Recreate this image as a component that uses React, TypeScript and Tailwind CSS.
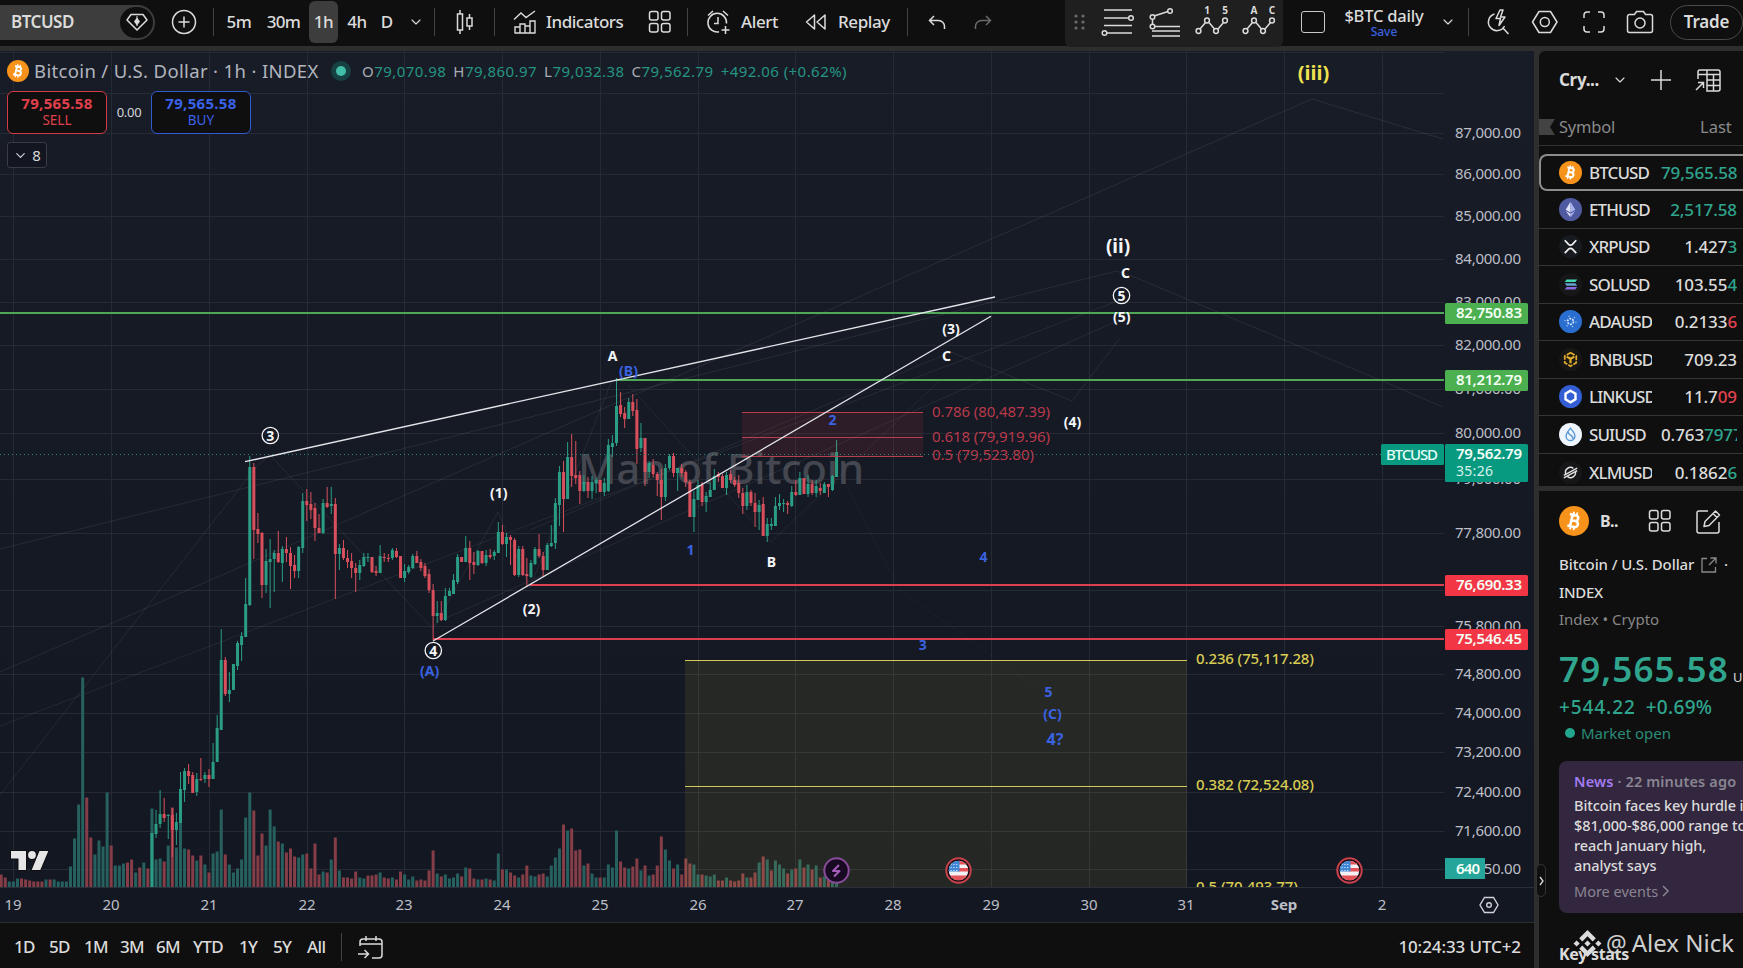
import type { ReactNode } from 'react'
import { ChevronDown } from 'lucide-react'

const UP = '#2a9d84'
const DOWN = '#d9505c'

// hour 0 is Aug 19 00:00
const FIRST_X = 13.3
const STEP = 4.075
const FIRST_CANDLE = 34
const FIRST_VOLUME = -3

// direction, high, body top, body bottom, low
const CANDLES = `
g 833 833 888 888|g 810 824 834 838|g 790 814 824 828|r 798 814 818 822|g 814 815 816 839|r 808 815 830 857
g 813 822 830 845|g 772 789 823 823|g 768 771 790 802|r 764 771 776 784|r 772 775 793 793|g 773 779 792 796
r 758 779 780 781|g 772 775 779 783|r 769 775 779 787|g 743 762 779 779|g 715 728 762 762|g 629 660 730 730
r 657 660 694 696|g 672 690 694 702|g 664 664 690 690|g 641 643 666 670|g 632 636 645 661|g 578 604 637 637
g 456 467 605 606|r 463 467 530 559|r 513 529 534 543|r 532 533 585 598|g 549 561 585 593|g 539 559 562 608
g 550 553 559 592|r 531 553 562 563|g 546 549 563 582|r 537 549 553 562|r 547 553 566 589|r 555 565 571 578
g 546 547 571 578|g 493 501 548 553|r 489 501 505 521|r 492 504 510 519|r 503 508 528 541|r 514 528 533 533
g 499 503 533 534|r 487 503 507 508|g 487 504 506 514|r 498 504 554 599|g 544 548 554 570|r 540 548 558 560
r 550 558 562 568|r 553 561 568 578|r 563 568 573 592|g 560 565 573 580|g 553 557 566 567|g 553 557 558 562
r 557 557 572 573|r 566 571 573 576|g 545 556 573 573|r 553 557 558 562|r 554 558 559 562|g 548 550 558 560
r 548 551 557 558|r 556 556 578 578|g 564 571 578 582|g 565 567 572 574|g 554 556 568 569|r 551 556 563 563
r 559 562 568 571|r 563 566 576 578|r 569 574 590 593|r 584 590 616 640|g 601 613 616 623|r 601 613 620 621
g 588 596 620 621|g 588 591 596 596|g 574 580 594 594|g 554 557 582 584|r 557 557 562 562|g 536 548 562 562
r 541 548 563 580|r 552 562 565 574|g 550 551 565 566|r 551 551 563 564|g 550 555 563 566|r 549 555 557 559
g 550 552 556 560|g 522 532 553 553|r 525 532 544 545|g 533 537 544 557|r 535 537 540 565|r 538 540 575 576
g 546 549 575 577|r 546 549 575 576|r 558 574 576 587|g 560 563 577 578|g 547 549 564 565|r 534 549 556 558
r 552 556 570 577|g 543 545 570 570|g 525 543 546 547|g 498 503 543 549|g 466 472 505 526|r 461 472 499 532
g 442 457 499 499|r 434 457 476 487|r 441 475 478 484|r 471 475 491 504|g 475 482 491 492|r 477 482 491 498
g 476 482 491 499|g 478 480 483 493|r 480 480 492 492|g 478 483 492 496|g 439 445 491 492|g 435 443 447 457
g 378 406 443 446|r 392 405 414 417|r 407 413 419 428|g 398 402 419 419|r 394 402 411 416|r 399 410 449 464
g 423 438 448 452|r 438 438 472 486|g 461 463 472 478|r 459 465 474 477|r 472 474 480 496|r 469 480 497 520
g 464 468 497 501|g 454 456 468 470|r 453 456 473 477|g 468 468 473 491|r 464 468 473 477|r 470 472 482 487
r 480 482 517 517|g 491 499 517 532|g 480 485 500 500|r 482 485 502 506|g 492 496 502 512|g 483 490 497 497
g 469 476 490 490|r 472 474 477 482|r 474 476 488 488|g 472 475 488 495|r 470 474 480 483|r 477 480 485 487
r 475 483 493 498|r 488 493 506 514|g 485 492 506 510|r 490 492 503 506|r 493 503 512 527|g 500 505 512 530
r 497 504 536 536|g 518 524 536 542|g 518 524 526 530|g 497 506 526 526|g 494 503 506 510|g 499 503 504 512
r 501 503 505 514|g 486 492 506 507|r 480 492 495 496|g 472 478 495 495|r 478 478 494 494|g 475 484 494 497
r 480 484 493 495|g 480 486 493 497|r 483 488 491 495|g 482 484 493 493|r 484 484 487 497|g 475 476 490 491
g 440 452 477 477`
  .trim()
  .split(/[|\n]/)
  .map((row) => {
    const [dir, ...values] = row.trim().split(' ')
    return { dir, values: values.map(Number) }
  })

const VOLUMES = `
r13 r10 g6 g6 g9 r9 r8 r7 r6 r6 r6 g8 r8 g8 g6 g6 g6 g21 g49 g83 g210 r90 r50 g33 g47 g41 g95 r42 g22 g22
g24 r25 r28 g15 r20 g25 r19 g79 g28 g29 r26 g42 r80 g40 g65 g39 r38 r32 g27 r32 g23 r15 g34 g36 g78 r33 g23
g15 g19 g28 g70 g95 r77 r32 r54 g42 g78 g61 r46 g44 r35 r39 r31 g30 g33 r34 r19 r44 r13 g16 r15 g28 r50 g17
r10 r10 r9 r16 g10 g9 r12 r12 r13 g15 r10 r9 g10 r8 r16 g13 g8 g11 r7 r8 r7 r17 r37 g14 r11 g13 g9 g10 g14
r11 g20 r19 r9 g8 r8 g9 r8 g7 g34 r18 g18 r15 r12 g10 r13 r22 g12 g11 r13 r14 g11 g22 g30 g39 r63 g57 r59
r37 r38 g22 r24 g14 g10 r10 g10 g23 g20 g57 r26 r20 g19 r21 r29 g17 r22 g12 r13 r22 r51 g38 g27 r19 g23 r13
r29 r24 g23 g13 r13 g12 g11 g13 r7 r7 g10 r7 r6 r7 r14 g10 r10 r15 g25 r31 g28 r17 g27 g23 g19 r14 g18 r19
g28 r20 g23 r18 g22 r10 g11 r8 g6 g6`
  .trim()
  .split(/\s+/)

const DAYS: [string, number][] = [
  ['19', 13], ['20', 111], ['21', 209], ['22', 307], ['23', 404], ['24', 502], ['25', 600], ['26', 698],
  ['27', 795], ['28', 893], ['29', 991], ['30', 1089], ['31', 1186], ['Sep', 1284], ['2', 1382],
]

const PRICES: [string, number][] = [
  ['', 52], ['', 93], ['87,000.00', 133], ['86,000.00', 174.5], ['85,000.00', 216.5], ['84,000.00', 259],
  ['83,000.00', 302], ['82,000.00', 345.5], ['81,000.00', 389.5], ['80,000.00', 433.5], ['79,000.00', 479],
  ['77,800.00', 533.5], ['', 590], ['75,800.00', 626.5], ['74,800.00', 674.5], ['74,000.00', 713],
  ['73,200.00', 752.5], ['72,400.00', 792], ['71,600.00', 831.5], ['70,850.00', 869],
]

const FAINT_LINES: [string, number][] = [
  ['0,672 1312,99 1443,139', 0.08],
  ['0,549 1117,271 1134,277 1380,380 1443,407', 0.08],
  ['0,726 1115,302', 0.07],
  ['0,795 256,467 270,455 433,629 498,512 530,588 612,380', 0.07],
  ['437,622 1115,322', 0.07],
  ['530,530 951,352 1072,401 1120,338', 0.07],
  ['628,385 771,542 940,380', 0.06],
  ['836,465 900,590 1040,690', 0.03],
]

interface Wave {
  t: string
  x: number
  y: number
  c?: string
  size?: number
  ring?: boolean
}

const BLUE = '#3a62e0'

const WAVES: Wave[] = [
  { t: '3', x: 270.3, y: 435.5, ring: true },
  { t: '4', x: 433.3, y: 650.5, ring: true },
  { t: '5', x: 1121.5, y: 295.5, ring: true },
  { t: '(1)', x: 498.7, y: 492.5 },
  { t: '(2)', x: 531.5, y: 608.5 },
  { t: '(3)', x: 951, y: 328.5 },
  { t: '(4)', x: 1072.5, y: 421.5 },
  { t: '(5)', x: 1121.7, y: 316.5 },
  { t: 'A', x: 612.5, y: 356 },
  { t: 'B', x: 771.5, y: 562 },
  { t: 'C', x: 946.5, y: 356 },
  { t: 'C', x: 1125.5, y: 273 },
  { t: '(ii)', x: 1118, y: 246, size: 19 },
  { t: '(iii)', x: 1313.6, y: 72.5, size: 20, c: '#f0e04f' },
  { t: '(A)', x: 429.7, y: 671, c: BLUE },
  { t: '(B)', x: 628.5, y: 370.5, c: BLUE },
  { t: '(C)', x: 1052.5, y: 713.5, c: BLUE },
  { t: '1', x: 690.6, y: 550, c: BLUE },
  { t: '2', x: 832.5, y: 420, c: BLUE },
  { t: '3', x: 922.7, y: 645, c: BLUE },
  { t: '4', x: 983.5, y: 557, c: BLUE },
  { t: '5', x: 1048.5, y: 692, c: BLUE },
  { t: '4?', x: 1055, y: 739.5, c: BLUE, size: 16 },
]

interface LabelProps {
  x: number
  y: number
  w?: number
  size?: number
  fill?: string
  weight?: number
  anchor?: 'start' | 'middle'
  children: ReactNode
}

function Label({ x, y, w, size = 15, fill = '#bdbfc7', weight = 400, anchor = 'start', children }: LabelProps) {
  return (
    <text x={x} y={y + size * 0.36} textLength={w} fontSize={size} fill={fill} fontWeight={weight} textAnchor={anchor}>
      {children}
    </text>
  )
}

function Tag({ y, color, text }: { y: number; color: string; text: string }) {
  return (
    <>
      <rect x="1445" y={y - 10.5} width="83" height="21" rx="1.5" fill={color} />
      <Label x={1456} y={y - 0.5} w={66} fill="#f4fff6" weight={600}>{text}</Label>
    </>
  )
}

function Flag({ x }: { x: number }) {
  return (
    <g transform={`translate(${x} 870.5)`}>
      <circle r="12.2" fill="#1a0c12" stroke="#c8414d" strokeWidth="2" />
      <clipPath id={`flag-${x}`}><circle r="9.8" /></clipPath>
      <g clipPath={`url(#flag-${x})`}>
        <rect x="-10" y="-10" width="20" height="20" fill="#f3f1f3" />
        <rect x="0" y="-10" width="10" height="4" fill="#e4525a" />
        <rect x="0" y="-2.5" width="10" height="3.5" fill="#e4525a" />
        <rect x="-10" y="5" width="20" height="6" fill="#e4525a" />
        <rect x="-10" y="-10" width="11" height="11" fill="#3f87d6" />
        <path d="M-8 -6h8M-8 -3h8M-8 0h8" stroke="#d6e6f8" strokeDasharray="1.2 1.6" />
      </g>
    </g>
  )
}

function Chart() {
  return (
    <svg className="block" width="1534" height="871" viewBox="0 51 1534 871">
      <defs>
        <linearGradient id="bg" x1="0" y1="0" x2="0" y2="1">
          <stop offset="0" stopColor="#181c27" />
          <stop offset="1" stopColor="#131722" />
        </linearGradient>
        <clipPath id="plot"><rect x="0" y="51" width="1444" height="836" /></clipPath>
      </defs>
      <rect x="0" y="51" width="1534" height="871" fill="url(#bg)" />

      <g clipPath="url(#plot)">
        {/* grid */}
        {DAYS.map(([d, x]) => (
          <path key={d} d={`M${x + 0.5} 51V887`} stroke="#262a35" />
        ))}
        {PRICES.map(([, y]) => (
          <path key={y} d={`M0 ${Math.floor(y) + 0.5}H1444`} stroke="#262a35" />
        ))}

        {/* watermark */}
        <Label x={578} y={469} w={286} size={42} fill="#44474f" weight={500}>Man of Bitcoin</Label>

        {FAINT_LINES.map(([points, opacity]) => (
          <polyline key={points} points={points} fill="none" stroke="#ffffff" strokeOpacity={opacity} />
        ))}

        {/* volume */}
        {VOLUMES.map((v, i) => {
          const h = Number(v.slice(1))
          return (
            <rect
              key={i}
              x={FIRST_X + (i + FIRST_VOLUME) * STEP - 1.4}
              y={887.5 - h}
              width="3"
              height={h}
              fill={v[0] === 'g' ? '#26615f' : '#853e48'}
            />
          )
        })}

        {/* candles */}
        {CANDLES.map(({ dir, values: [hi, top, bottom, lo] }, i) => {
          const x = FIRST_X + (i + FIRST_CANDLE) * STEP
          return (
            <g key={i} fill={dir === 'g' ? UP : DOWN}>
              <rect x={x - 0.4} y={hi} width="1" height={lo - hi} />
              <rect x={x - 1.4} y={top} width="3" height={Math.max(bottom - top, 1)} />
            </g>
          )
        })}

        {/* fib zones */}
        <rect x="742" y="412" width="181" height="44.5" fill="#f23645" fillOpacity="0.1" />
        <path d="M742 412.5H923M742 437.5H923M742 456.5H923" stroke="#b8404e" />
        <rect x="685" y="660" width="502" height="228" fill="#ffeb3b" fillOpacity="0.08" />
        <path d="M685 660.5H1187M685 786.5H1187" stroke="#d3c95c" />
        <Label x={932} y={411.5} w={118} fill="#b8394b">0.786 (80,487.39)</Label>
        <Label x={932} y={437} w={118} fill="#b8394b">0.618 (79,919.96)</Label>
        <Label x={932} y={455} w={102} fill="#b8394b">0.5 (79,523.80)</Label>
        <Label x={1196} y={659} w={118} fill="#d8cc52" weight={500}>0.236 (75,117.28)</Label>
        <Label x={1196} y={785} w={118} fill="#d8cc52" weight={500}>0.382 (72,524.08)</Label>
        <Label x={1196} y={887} w={102} fill="#d8cc52" weight={500}>0.5 (70,493.77)</Label>

        {/* levels */}
        <path d="M0 313H1444M617 380H1444" stroke="#4fa757" strokeWidth="2" />
        <path d="M530 585H1444M433 639H1444" stroke="#dc3f50" strokeWidth="2" />
        <path d="M0 454.5H1444" stroke="#2a8478" strokeDasharray="1 3" />
        <path d="M245 461.7L995 297M433 641L991 316.3" stroke="#e4e5e9" strokeWidth="1.3" />

        {/* wave labels */}
        {WAVES.map(({ t, x, y, c = '#f5f6f8', size = 14, ring }) => (
          <g key={`${t}-${x}`}>
            {ring && <circle cx={x} cy={y} r="8.2" fill="none" stroke={c} strokeWidth="1.3" />}
            <Label x={x} y={y} size={size} fill={c} weight={700} anchor="middle">{t}</Label>
          </g>
        ))}

        {/* events */}
        <circle cx="836.5" cy="870.5" r="12.2" fill="#170a22" stroke="#8a4b9c" strokeWidth="2" />
        <path d="M839 865l-6 6h6.500l-5.500 5.500" fill="none" stroke="#a55cb8" strokeWidth="2" strokeLinejoin="round" />
        <Flag x={958.5} />
        <Flag x={1349.5} />

        <g fill="#e6e6e6" stroke="#0f0f0f" strokeWidth="2" paintOrder="stroke">
          <path d="M11 851h15v19h-7.500v-11.500h-7.500z" />
          <circle cx="32" cy="855" r="3.9" />
          <path d="M39.500 851h8.800l-8 19h-8.600z" />
        </g>
      </g>

      {/* price axis */}
      {PRICES.filter(([p]) => p).map(([p, y]) => (
        <Label key={p} x={1455} y={y - 0.5} w={66}>{p}</Label>
      ))}
      <Tag y={313.5} color="#4caf50" text="82,750.83" />
      <Tag y={380.5} color="#4caf50" text="81,212.79" />
      <Tag y={585.5} color="#f23645" text="76,690.33" />
      <Tag y={639.5} color="#f23645" text="75,546.45" />
      <rect x="1381" y="444" width="63" height="21" rx="1.5" fill="#089981" />
      <Label x={1386} y={454.5} w={52} fill="#e4fff8" weight={500}>BTCUSD</Label>
      <rect x="1445" y="444" width="83" height="38" rx="1.5" fill="#089981" />
      <Label x={1456} y={453.5} w={66} fill="#f4fff6" weight={600}>79,562.79</Label>
      <Label x={1456} y={470.5} w={37} size={14} fill="#d8f3ec">35:26</Label>
      <rect x="1445" y="858" width="40" height="21" fill="#26a69a" />
      <Label x={1456} y={868.5} w={24} fill="#f4fff6" weight={600}>640</Label>

      {/* time axis */}
      <path d="M0 887.500H1534" stroke="#2b2f3a" />
      {DAYS.map(([d, x]) => (
        <Label key={d} x={x} y={905} anchor="middle" weight={d === 'Sep' ? 700 : 400}>{d}</Label>
      ))}
      <g transform="translate(1489 905)" fill="none" stroke="#d0d1d6" strokeWidth="1.4">
        <path d="M-4.500 -7.500h9l4.500 7.500l-4.500 7.500h-9l-4.500 -7.500z" />
        <circle r="2.3" />
      </g>
    </svg>
  )
}

interface IconProps {
  w: number
  h: number
  sw?: number
  className?: string
  children: ReactNode
}

function Icon({ w, h, sw = 1.5, className = '', children }: IconProps) {
  return (
    <svg
      className={`shrink-0 overflow-visible ${className}`}
      width={w}
      height={h}
      viewBox={`0 0 ${w} ${h}`}
      fill="none"
      stroke="currentColor"
      strokeWidth={sw}
    >
      {children}
    </svg>
  )
}

function Sep() {
  return <div className="w-px h-7 bg-[#434343] shrink-0" />
}

function GridIcon() {
  return (
    <Icon w={24} h={24}>
      <rect x="1.5" y="1.5" width="8.5" height="8.5" rx="2" />
      <rect x="13.5" y="1.5" width="8.5" height="8.5" rx="2" />
      <rect x="1.5" y="13.5" width="8.5" height="8.5" rx="2" />
      <rect x="13.5" y="13.5" width="8.5" height="8.5" rx="2" />
    </Icon>
  )
}

function BitcoinIcon({ size }: { size: number }) {
  return (
    <svg className="shrink-0" width={size} height={size} viewBox="0 0 30 30">
      <circle cx="15" cy="15" r="15" fill="#f7931a" />
      <g transform="rotate(13 15 15)" fill="none" stroke="#fff" strokeWidth="2.6">
        <path d="M12.300 9v12M9.500 9.200h6.300a2.700 2.700 0 0 1 0 5.500h-3.500h4.200a3 3 0 0 1 0 6.100h-7" />
        <path d="M13 6v3M16.500 6v3M13 21v3M16.500 21v3" strokeWidth="1.8" />
      </g>
    </svg>
  )
}

function WaveIcon({ a, b }: { a: string; b: string }) {
  return (
    <Icon w={34} h={30}>
      <path d="M5 24L10.500 17.500M14 17.500L19.500 24M23 24L28.500 17.500" />
      <circle cx="3.5" cy="26" r="2.4" />
      <circle cx="12" cy="15.5" r="2.4" />
      <circle cx="21" cy="26" r="2.4" />
      <circle cx="30" cy="15.5" r="2.4" />
      <text x="12" y="8.5" fontSize="10" fontWeight="700" textAnchor="middle" fill="currentColor" stroke="none">{a}</text>
      <text x="30" y="8.5" fontSize="10" fontWeight="700" textAnchor="middle" fill="currentColor" stroke="none">{b}</text>
    </Icon>
  )
}

function Toolbar() {
  return (
    <header className="h-[46px] flex items-center bg-[#0f0f0f] text-[#dbdbdb] text-[17px] font-medium whitespace-nowrap shrink-0 pb-[2px]">
      <div className="w-[155px] h-[35px] rounded-r-full rounded-l-2xl bg-[#3d3d3d] flex items-center justify-between pl-[11px] pr-[2px]">
        <span className="font-semibold tracking-[-0.5px]">BTCUSD</span>
        <div className="w-[33px] h-[31px] rounded-full bg-[#0f0f0f] flex items-center justify-center">
          <Icon w={22} h={18}>
            <path d="M5 1.500h12l4 5.500l-10 10l-10 -10z" strokeLinejoin="round" />
            <path d="M11 4.500l3 4l-3 4l-3 -4z" fill="currentColor" stroke="none" />
            <path d="M11 3v10" strokeWidth="1" />
          </Icon>
        </div>
      </div>
      <div className="w-[58px] flex justify-center">
        <Icon w={26} h={26}>
          <circle cx="13" cy="13" r="11.5" />
          <path d="M13 7.500v11M7.500 13h11" />
        </Icon>
      </div>
      <Sep />
      <div className="w-[50px] text-center tracking-[-0.5px]">5m</div>
      <div className="w-[39px] text-center tracking-[-0.7px]">30m</div>
      <div className="w-[29px] h-[42px] ml-1.5 rounded-md bg-[#3d3d3d] flex items-center justify-center tracking-[-0.5px]">1h</div>
      <div className="w-[38px] text-center tracking-[-0.5px]">4h</div>
      <div className="w-[22px] text-center">D</div>
      <div className="w-[36px] flex justify-center"><ChevronDown size={16} strokeWidth={1.7} /></div>
      <Sep />
      <div className="w-[59px] flex justify-center">
        <Icon w={20} h={26}>
          <rect x="2.5" y="5" width="5" height="16" />
          <path d="M5 1v4M5 21v4M14.500 5v4M14.500 17v4" />
          <rect x="12" y="9" width="5" height="8" />
        </Icon>
      </div>
      <Sep />
      <Icon w={24} h={24} className="ml-[18px]" sw={1.4}>
        <path d="M1 9.500L8 3l5 4.500L22 1M2 23v-6h5v6M7 23v-9h5v9M12 23v-7h5v7M17 23v-12h5v12M1.500 23h21" />
      </Icon>
      <div className="w-[77px] ml-[9px] tracking-[-0.5px]">Indicators</div>
      <div className="w-[64px] flex justify-center pl-[10px]"><GridIcon /></div>
      <Sep />
      <Icon w={26} h={26} className="ml-[18px]">
        <path d="M20.500 14.500a9.300 9.300 0 1 0 -7.500 8.300" />
        <path d="M12 8v6.500h-4M2 6.500l5 -4.500M17 2l5 4.500M19.500 17v8M15.500 21h8" />
      </Icon>
      <div className="w-[64px] ml-[9px] tracking-[-0.4px]">Alert</div>
      <Icon w={22} h={18}>
        <path d="M9.500 2v14l-8 -7zM20 2v14l-8 -7z" strokeLinejoin="round" />
      </Icon>
      <div className="w-[69px] ml-[11px] tracking-[-0.4px]">Replay</div>
      <Sep />
      <div className="w-[58px] flex justify-center">
        <Icon w={18} h={15}><path d="M6 1L1.500 5.500L6 10M1.500 5.500h9a6 6 0 0 1 6 6v2.500" /></Icon>
      </div>
      <div className="w-[33px] flex justify-center text-[#6a6a6a]">
        <Icon w={18} h={15}><path d="M12 1l4.500 4.500L12 10M16.500 5.500h-9a6 6 0 0 0 -6 6v2.500" /></Icon>
      </div>
      <div className="ml-[66px] w-[218px] h-[50px] rounded-b-md bg-[#1f1f1f] flex items-center relative z-10">
        <Icon w={12} h={16} sw={0} className="ml-[9px] text-[#6b6b6b]">
          <g fill="currentColor">
            <circle cx="2" cy="2" r="1.6" /><circle cx="9" cy="2" r="1.6" />
            <circle cx="2" cy="8" r="1.6" /><circle cx="9" cy="8" r="1.6" />
            <circle cx="2" cy="14" r="1.6" /><circle cx="9" cy="14" r="1.6" />
          </g>
        </Icon>
        <Icon w={33} h={28} className="ml-[15px]">
          <path d="M3 2h28M3 10h25M3 17.500h28M6 25h25" />
          <circle cx="30" cy="10" r="2.3" /><circle cx="3.5" cy="25" r="2.3" />
        </Icon>
        <Icon w={32} h={30} className="ml-[15px]">
          <path d="M5 9l14 -4.500M3.500 12v5M5 19.500h26M3 24h28M3 29h28" />
          <circle cx="3.5" cy="10" r="2.3" /><circle cx="3.5" cy="19.5" r="2.3" /><circle cx="21" cy="4" r="2.3" />
        </Icon>
        <div className="ml-[14px] mb-1 flex gap-[13px]">
          <WaveIcon a="1" b="5" />
          <WaveIcon a="A" b="C" />
        </div>
      </div>
      <div className="w-[24px] h-[22px] ml-[18px] border-[1.5px] border-[#c9c9c9] rounded-[3px]" />
      <div className="w-[84px] ml-[17px] text-center leading-none">
        <div className="text-[16.5px] tracking-[-0.2px] leading-[20px]">$BTC daily</div>
        <div className="text-[12px] leading-[12px] text-[#3a62e0]">Save</div>
      </div>
      <ChevronDown size={16} strokeWidth={1.7} className="ml-[14px] mr-[12px]" />
      <Sep />
      <Icon w={24} h={28} className="ml-[17px]">
        <path d="M8.500 6a8.500 8.500 0 1 0 10 12M16.500 19.500l6 6.500M14 2l-4 8.500h4.500l-1.500 7l6 -8.500h-4.500l2.500 -7z" strokeLinejoin="round" />
      </Icon>
      <Icon w={28} h={24} className="ml-[21px]">
        <path d="M8 1.500h11.500l6.500 10.500l-6.500 10.500h-11.500l-6.500 -10.500z" strokeLinejoin="round" />
        <circle cx="13.8" cy="12" r="4.5" />
      </Icon>
      <Icon w={22} h={22} className="ml-[24px]">
        <path d="M1 7V4a3 3 0 0 1 3 -3h3M15 1h3a3 3 0 0 1 3 3v3M21 15v3a3 3 0 0 1 -3 3h-3M7 21H4a3 3 0 0 1 -3 -3v-3" />
      </Icon>
      <Icon w={28} h={24} className="ml-[21px]">
        <path d="M3.500 4.500h5l2 -3h7l2 3h5a2 2 0 0 1 2 2v14a2 2 0 0 1 -2 2h-21a2 2 0 0 1 -2 -2v-14a2 2 0 0 1 2 -2z" />
        <circle cx="14" cy="13" r="5" />
      </Icon>
      <div className="ml-auto w-[73px] h-[35px] rounded-full border border-[#4a4a4a] flex items-center justify-center font-semibold tracking-[-0.2px]">Trade</div>
    </header>
  )
}

function Quote({ k, v }: { k: string; v: string }) {
  return (
    <span className="mr-[7px] text-[#a9abb3]">{k}<span className="text-[#259582]">{v}</span></span>
  )
}

function Legend() {
  return (
    <div className="absolute left-[7px] top-[9px] whitespace-nowrap">
      <div className="flex items-center h-[22px]">
        <BitcoinIcon size={22} />
        <div className="w-[296px] ml-[5px] text-[18.5px] tracking-[0.35px] text-[#b2b5be]">Bitcoin / U.S. Dollar · 1h · INDEX</div>
        <div className="w-5 h-5 ml-px rounded-full bg-[#164042] flex items-center justify-center">
          <div className="w-2.5 h-2.5 rounded-full bg-[#42bda8]" />
        </div>
        <div className="ml-[11px] text-[15px] tracking-[0.45px]">
          <Quote k="O" v="79,070.98" />
          <Quote k="H" v="79,860.97" />
          <Quote k="L" v="79,032.38" />
          <Quote k="C" v="79,562.79" />
          <span className="text-[#259582]">+492.06 (+0.62%)</span>
        </div>
      </div>
      <div className="flex items-center mt-[9px]">
        <div className="w-[100px] h-[43px] rounded-md border border-[#d23c48] bg-[#0f0f0f] text-[#e0404c] text-center">
          <div className="text-[15px] font-bold tracking-[0.3px] leading-[18px] pt-[2px]">79,565.58</div>
          <div className="text-[13.5px] leading-[16px]">SELL</div>
        </div>
        <div className="w-[44px] text-center text-[13px] tracking-[-0.3px] text-[#d5d6da]">0.00</div>
        <div className="w-[100px] h-[43px] rounded-md border border-[#335bd0] bg-[#0f0f0f] text-[#3a62e8] text-center">
          <div className="text-[15px] font-bold tracking-[0.3px] leading-[18px] pt-[2px]">79,565.58</div>
          <div className="text-[13.5px] leading-[16px]">BUY</div>
        </div>
      </div>
      <div className="w-10 h-[26px] mt-2 rounded-[3px] border border-[#3a3c42] bg-[#131620] flex items-center justify-center gap-1 text-[#d5d6da] text-[15px]">
        <ChevronDown size={15} strokeWidth={1.8} />8
      </div>
    </div>
  )
}

const RANGES: [string, string][] = [
  ['1D', 'w-[35px]'], ['5D', 'w-[35px]'], ['1M', 'w-[36px]'], ['3M', 'w-[36px]'], ['6M', 'w-[37px]'],
  ['YTD', 'w-[46px]'], ['1Y', 'w-[34px]'], ['5Y', 'w-[34px]'], ['All', 'w-[34px]'],
]

function BottomBar() {
  return (
    <div className="h-[46px] border-t border-[#2e2e2e] bg-[#0f0f0f] flex items-center pl-[14px] pt-[3px] pr-[13px] text-[#dbdbdb] text-[17px] font-medium whitespace-nowrap tracking-[-0.6px]">
      {RANGES.map(([label, width]) => (
        <div key={label} className={width}>{label}</div>
      ))}
      <Sep />
      <Icon w={26} h={25} className="ml-[16px]">
        <path d="M2 11V7a3 3 0 0 1 3 -3h16a3 3 0 0 1 3 3v13a3 3 0 0 1 -3 3h-7M2 9h22M8 1v5M18 1v5M0 19h10M6.500 15l4 4l-4 4" />
      </Icon>
      <div className="ml-auto tracking-[-0.1px]">10:24:33 UTC+2</div>
    </div>
  )
}

function CoinIcon({ symbol }: { symbol: string }) {
  if (symbol === 'BTCUSD') return <BitcoinIcon size={23} />
  return (
    <svg className="shrink-0" width="23" height="23" viewBox="0 0 24 24" fill="none">
      {symbol === 'ETHUSD' && (
        <>
          <circle cx="12" cy="12" r="12" fill="#505aa0" />
          <path d="M12 4l-5 8.200l5 3z" fill="#dfe4fb" /><path d="M12 4l5 8.200l-5 3z" fill="#a9b4ee" />
          <path d="M7 13.500l5 6.500v-3.500z" fill="#dfe4fb" /><path d="M17 13.500l-5 6.500v-3.500z" fill="#a9b4ee" />
        </>
      )}
      {symbol === 'XRPUSD' && (
        <>
          <circle cx="12" cy="12" r="12" fill="#171a1e" />
          <path d="M6 5.500l4 4.300a2.800 2.800 0 0 0 4 0l4 -4.300M6 19l4 -4.300a2.800 2.800 0 0 1 4 0l4 4.300" stroke="#f0f0f0" strokeWidth="1.8" />
        </>
      )}
      {symbol === 'SOLUSD' && (
        <>
          <circle cx="12" cy="12" r="12" fill="#171719" />
          <path d="M8 6.800h11l-2 2.700H6z" fill="#46d6b4" />
          <path d="M6 10.700h11l2 2.700H8z" fill="#63a3cf" />
          <path d="M8 14.600h11l-2 2.700H6z" fill="#8a6be0" />
        </>
      )}
      {symbol === 'ADAUSD' && (
        <>
          <circle cx="12" cy="12" r="12" fill="#2a6fd0" />
          <circle cx="12" cy="12" r="3" stroke="#e6f0ff" strokeWidth="1.7" strokeDasharray="1.9 1.24" />
          <circle cx="12" cy="12" r="5.7" stroke="#b8d3fa" strokeWidth="1.2" strokeDasharray="1.2 4.77" />
        </>
      )}
      {symbol === 'BNBUSD' && (
        <>
          <circle cx="12" cy="12" r="12" fill="#181715" />
          <path d="M12 5l6 3.300v7L12 19l-6 -3.700v-7z" stroke="#e0aa2c" strokeWidth="1.8" strokeDasharray="5 1.2" />
          <path d="M8 9l4 2.300l4 -2.300M12 11.500v4.500" stroke="#e0aa2c" strokeWidth="2.4" />
        </>
      )}
      {symbol === 'LINKUSD' && (
        <>
          <circle cx="12" cy="12" r="12" fill="#335dd2" />
          <path d="M12 6l5.200 3v6L12 18l-5.200 -3V9z" stroke="#fff" strokeWidth="2.5" />
        </>
      )}
      {symbol === 'SUIUSD' && (
        <>
          <circle cx="12" cy="12" r="12" fill="#eef5fc" />
          <path d="M12 5.500c2.800 3.300 4.600 5.300 4.600 8.200a4.600 4.600 0 0 1 -9.200 0c0 -2.900 1.800 -4.900 4.600 -8.200zM9.500 9.500c.3 3.500 6 3 5 7.500" stroke="#5d9bd6" strokeWidth="1.5" />
        </>
      )}
      {symbol === 'XLMUSD' && (
        <>
          <circle cx="12" cy="12" r="12" fill="#171719" />
          <path d="M7 13.500a5.200 5.200 0 0 1 8 -5.800M17 10.500a5.200 5.200 0 0 1 -8 5.800M5 15L19 7.500M5 17.500L19 10" stroke="#e2e2e2" strokeWidth="1.5" />
        </>
      )}
    </svg>
  )
}

// symbol, steady digits, digits that just ticked, tick colour
const WATCHLIST: [string, string, string, string][] = [
  ['BTCUSD', '', '79,565.58', 'text-[#2fa58e]'],
  ['ETHUSD', '', '2,517.58', 'text-[#2fa58e]'],
  ['XRPUSD', '1.427', '3', 'text-[#2fa58e]'],
  ['SOLUSD', '103.55', '4', 'text-[#2fa58e]'],
  ['ADAUSD', '0.2133', '6', 'text-[#e04350]'],
  ['BNBUSD', '709.23', '', ''],
  ['LINKUSD', '11.7', '09', 'text-[#e04350]'],
  ['SUIUSD', '0.763', '7977', 'text-[#2fa58e]'],
  ['XLMUSD', '0.1862', '6', 'text-[#2fa58e]'],
]

function Watchlist() {
  return (
    <section className="h-[435px] overflow-hidden bg-[#0f0f0f] rounded-tl-md shrink-0">
      <div className="flex items-center h-[58px] pl-5 text-[#dbdbdb]">
        <div className="w-[53px] text-[17px] font-bold tracking-[-0.3px]">Cry...</div>
        <ChevronDown size={16} strokeWidth={1.7} />
        <Icon w={20} h={20} className="ml-[23px]"><path d="M10 0v20M0 10h20" /></Icon>
        <Icon w={26} h={25} className="ml-[24px]">
          <path d="M3 11V4a2 2 0 0 1 2 -2h18a2 2 0 0 1 2 2v17a2 2 0 0 1 -2 2h-11v-21M18.500 6v17M3 6.500h22M12 12h13M12 17.500h13M1 22l7 -7M3 14.500h5.500v5.500" />
        </Icon>
      </div>
      <div className="flex items-center h-[37px] border-b border-[#333] text-[16.5px] text-[#8a8a8a]">
        <svg className="shrink-0" width="16" height="16" viewBox="0 0 16 16"><path d="M0 0h16l-5 8l5 8H0z" fill="#434343" /></svg>
        <div className="ml-1 w-[141px] tracking-[-0.2px]">Symbol</div>
        <div>Last</div>
      </div>
      <div className="pt-2">
        {WATCHLIST.map(([symbol, head, tick, color], i) => (
          <div
            key={symbol}
            className={
              i === 0
                ? 'h-[37px] border-2 border-r-0 border-[#8c8c8c] rounded-l-lg flex items-center pl-[18px]'
                : 'h-[37.5px] border-b border-[#353535] flex items-center pl-5 last:border-b-0'
            }
          >
            <CoinIcon symbol={symbol} />
            <div className="w-[63px] ml-[7px] overflow-hidden text-[17px] tracking-[-0.9px] font-medium text-[#dbdbdb] shrink-0">{symbol}</div>
            <div className="w-[76px] ml-[9px] text-right text-[17px] tracking-[-0.1px] font-medium text-[#dbdbdb] whitespace-nowrap overflow-hidden shrink-0">
              {head}<span className={color}>{tick}</span>
            </div>
          </div>
        ))}
      </div>
    </section>
  )
}

function Details() {
  return (
    <section className="flex-1 min-h-0 overflow-hidden bg-[#0f0f0f] pl-5 text-[#dbdbdb] whitespace-nowrap">
      <div className="flex items-center h-[30px] mt-[15px]">
        <BitcoinIcon size={30} />
        <div className="w-[48px] ml-[11px] text-[16px] font-bold tracking-[-0.5px]">B..</div>
        <GridIcon />
        <Icon w={26} h={25} className="ml-[23px]">
          <path d="M13 2H4a2 2 0 0 0 -2 2v18a2 2 0 0 0 2 2h18a2 2 0 0 0 2 -2v-9M10 12.500L20.500 2l4 4L14 16.500l-5 1zM18 4.500l4 4" strokeLinejoin="round" />
        </Icon>
      </div>
      <div className="mt-[15px] text-[15px] font-medium leading-[27.5px]">
        <div className="flex items-center">
          <span className="w-[142px] tracking-[-0.1px]">Bitcoin / U.S. Dollar</span>
          <Icon w={16} h={16} sw={1.3} className="text-[#8a8a8a]">
            <path d="M6 1.500H1v13.500h13.500v-5M9.500 1h5.500v5.500M15 1L8 8" />
          </Icon>
          <span className="ml-[7px]">·</span>
        </div>
        <div className="tracking-[-0.3px]">INDEX</div>
      </div>
      <div className="text-[15px] leading-[27px] text-[#868686]">Index • Crypto</div>
      <div className="flex items-baseline mt-[13px] leading-[46px]">
        <span className="w-[174px] shrink-0 text-[35px] font-semibold tracking-[1.15px] text-[#2fa58e]">79,565.58</span>
        <span className="text-[13px]">USD</span>
      </div>
      <div className="flex gap-[10px] text-[19px] leading-[26px] -mt-[6px] font-medium tracking-[0.9px] text-[#2fa58e]">
        <span>+544.22</span>
        <span className="tracking-[0.3px]">+0.69%</span>
      </div>
      <div className="flex items-center pl-[6px] mt-px text-[15px] leading-[24px] text-[#2a8c78]">
        <span className="w-2.5 h-2.5 rounded-full bg-[#22a68d] mr-[6px]" />Market open
      </div>
      <div className="mt-[16px] h-[152px] w-[200px] rounded-lg bg-[#32273f] pl-[15px] pt-[10px] text-[14.5px] leading-[20px]">
        <div className="font-semibold tracking-[0.15px] text-[#8a8592]"><span className="text-[#a37bf0]">News</span> · 22 minutes ago</div>
        <div className="mt-[4px] font-medium tracking-[-0.1px]">
          Bitcoin faces key hurdle in<br />$81,000-$86,000 range to<br />reach January high,<br />analyst says
        </div>
        <div className="mt-[6px] text-[#8a8592] flex items-center gap-1">
          More events
          <Icon w={8} h={12}><path d="M1 1l5 5l-5 5" /></Icon>
        </div>
      </div>
      <div className="relative mt-[28px] text-[16px] leading-[26px] font-bold tracking-[-0.3px]">
        Key stats
        <div className="absolute left-[14px] -top-[14px] flex items-center h-[32px] font-normal tracking-normal text-[#cfcfcf]">
          <svg width="29" height="29" viewBox="0 0 28 28" fill="#dcdcdc">
            <path d="M14 1l8 8l-3 3l-5 -5l-5 5l-3 -3zM14 27l8 -8l-3 -3l-5 5l-5 -5l-3 3zM14 11l3 3l-3 3l-3 -3zM3.500 11l3 3l-3 3l-3 -3zM24.500 11l3 3l-3 3l-3 -3z" />
          </svg>
          <span className="ml-[4px] text-[23px]">@</span>
          <span className="ml-[5px] text-[24px]">Alex Nick</span>
        </div>
      </div>
    </section>
  )
}

export default function App() {
  return (
    <div className="w-[1743px] h-[968px] overflow-hidden bg-[#2e2e2e] flex flex-col font-['Noto_Sans',sans-serif]">
      <Toolbar />
      <div className="flex flex-1 min-h-0 pt-[5px]">
        <main className="w-[1534px] shrink-0 flex flex-col relative">
          <Chart />
          <Legend />
          <BottomBar />
        </main>
        <aside className="ml-[5px] flex-1 min-w-0 flex flex-col gap-[5px] relative">
          <Watchlist />
          <Details />
          <div className="absolute -left-[3px] top-[813px] w-[10px] h-[33px] rounded-md border border-[#333] bg-[#0f0f0f] text-[#dbdbdb] flex items-center justify-center">
            <Icon w={5} h={10} sw={1.3}><path d="M1 1l3 4l-3 4" /></Icon>
          </div>
        </aside>
      </div>
    </div>
  )
}
